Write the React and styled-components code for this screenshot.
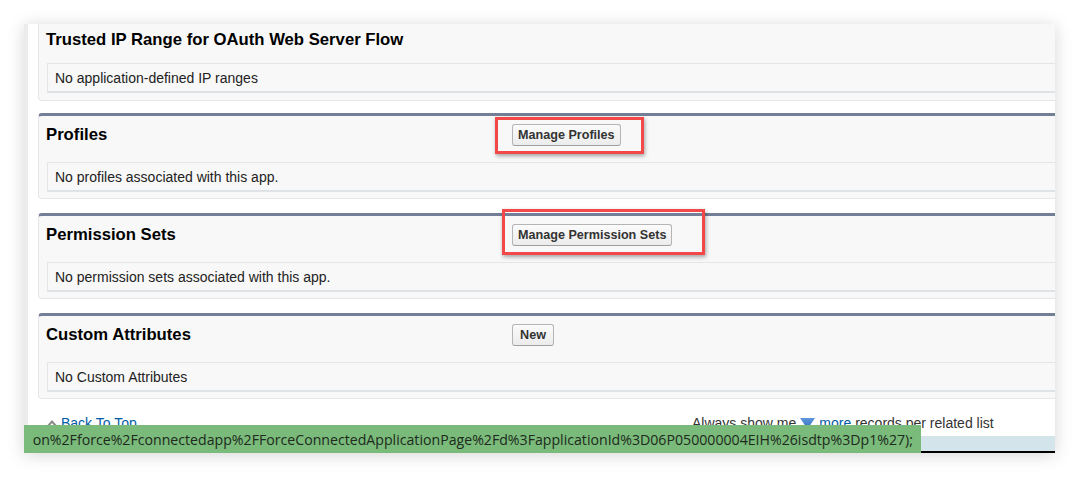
import React from 'react';
import styled, { createGlobalStyle } from 'styled-components';

const Global = createGlobalStyle`
  html, body { margin: 0; padding: 0; background: #fff; }
  body { font-family: "Liberation Sans", Arial, sans-serif; }
`;

const Stage = styled.div`
  box-sizing: border-box;
  width: 1079px;
  height: 477px;
  padding: 24px 0 0 24px;
  overflow: hidden;
`;

const Window = styled.div`
  position: relative;
  display: flex;
  width: 1031px;
  height: 429px;
  overflow: hidden;
  background: #fff;
  box-shadow: 0 2px 16px rgba(0, 0, 0, 0.17);
`;

const LeftRail = styled.div`
  flex: none;
  width: 4px;
  background: #ececec;
`;

const Content = styled.div`
  flex: none;
  display: flex;
  flex-direction: column;
  width: 1500px;
  padding-left: 10px;
`;

const Panel = styled.section`
  box-sizing: border-box;
  background: #f8f8f8;
  border: 1px solid #e6e6e6;
  border-top: ${(p) => (p.$clipped ? 'none' : '3px solid #747e96')};
  border-radius: ${(p) => (p.$clipped ? '0 0 4px 4px' : '4px')};
  padding-bottom: ${(p) => (p.$clipped ? 7 : 6)}px;
  margin-bottom: ${(p) => (p.$clipped ? 12 : 14)}px;
`;

const Header = styled.div`
  display: grid;
  grid-template-columns: 466px auto;
  align-items: center;
  height: ${(p) => (p.$clipped ? 31 : 38)}px;
  padding-left: 7px;
`;

const Title = styled.h2`
  margin: 0;
  font-size: 16.7px;
  font-weight: bold;
  color: #000;
  white-space: nowrap;
`;

const ButtonSlot = styled.div`
  position: relative;
  justify-self: start;
  display: inline-flex;
`;

const Button = styled.button`
  box-sizing: border-box;
  height: 22px;
  min-width: 42px;
  padding: 0 5px;
  font-family: "Liberation Sans", Arial, sans-serif;
  font-size: 12.6px;
  font-weight: bold;
  color: #333;
  background: linear-gradient(#fbfbfb, #ececec);
  border: 1px solid #b5b5b5;
  border-bottom-color: #9f9f9f;
  border-radius: 3px;
  cursor: pointer;
`;

const Highlight = styled.span`
  position: absolute;
  box-sizing: border-box;
  top: ${(p) => p.$t}px;
  right: ${(p) => p.$r}px;
  bottom: ${(p) => p.$b}px;
  left: ${(p) => p.$l}px;
  border: 3px solid #f24848;
  box-shadow: 1px 2px 4px rgba(0, 0, 0, 0.35);
  pointer-events: none;
  z-index: 2;
`;

const EmptyRow = styled.div`
  box-sizing: border-box;
  display: flex;
  align-items: center;
  height: 30px;
  margin: 8px 8px 0;
  padding-left: 7px;
  background: #f8f8f8;
  border: 1px solid #e3e5e7;
  border-bottom: 2px solid #e0e3e5;
  font-size: 14px;
  color: #222;
  white-space: nowrap;
`;

const Footer = styled.div`
  display: grid;
  grid-template-columns: 645px auto;
  align-items: center;
  height: 16px;
  margin-top: 2px;
  padding-left: 9px;
  font-size: 14px;
  color: #333;
  white-space: nowrap;
`;

const Link = styled.a`
  color: #015ba7;
  text-decoration: none;
  cursor: pointer;
`;

const BackToTop = styled(Link)`
  display: inline-flex;
  align-items: center;
  gap: 4px;
`;

const Pager = styled.div`
  display: inline-flex;
  align-items: center;
  gap: 4px;
`;

const BottomBar = styled.div`
  height: 15px;
  margin-top: 5px;
  background: #d3e4eb;
  border-bottom: 2px solid #000;
`;

const StatusBubble = styled.div`
  position: absolute;
  left: 0;
  bottom: 0;
  box-sizing: border-box;
  display: flex;
  justify-content: flex-end;
  align-items: center;
  width: 897px;
  height: 28px;
  padding-right: 8px;
  overflow: hidden;
  background: #7aba7a;
  color: #1d2a1d;
  font-family: "Open Sans", "Noto Sans", sans-serif;
  font-size: 14.15px;
  white-space: nowrap;
  z-index: 3;
`;

const ArrowUp = () => (
  <svg width="10" height="8" viewBox="0 0 10 8">
    <polyline points="1,7 5,2.5 9,7" fill="none" stroke="#8a8a8a" strokeWidth="2" />
  </svg>
);

const TriangleDown = () => (
  <svg width="15" height="11" viewBox="0 0 15 11">
    <defs>
      <linearGradient id="tri" x1="0" y1="0" x2="0" y2="1">
        <stop offset="0" stopColor="#5f97dc" />
        <stop offset="1" stopColor="#2f6cc0" />
      </linearGradient>
    </defs>
    <polygon points="0,0 15,0 7.5,11" fill="url(#tri)" />
  </svg>
);

const sections = [
  { title: 'Profiles', button: 'Manage Profiles', empty: 'No profiles associated with this app.', mark: { t: -7, r: -23, b: -8, l: -17 } },
  { title: 'Permission Sets', button: 'Manage Permission Sets', empty: 'No permission sets associated with this app.', mark: { t: -15, r: -33, b: -9, l: -10 } },
  { title: 'Custom Attributes', button: 'New', empty: 'No Custom Attributes' },
];

export default function App() {
  return (
    <>
      <Global />
      <Stage>
        <Window>
          <LeftRail />
          <Content>
            <Panel $clipped>
              <Header $clipped>
                <Title>Trusted IP Range for OAuth Web Server Flow</Title>
              </Header>
              <EmptyRow>No application-defined IP ranges</EmptyRow>
            </Panel>
            {sections.map((s) => (
              <Panel key={s.title}>
                <Header>
                  <Title>{s.title}</Title>
                  <ButtonSlot>
                    <Button>{s.button}</Button>
                    {s.mark && <Highlight $t={s.mark.t} $r={s.mark.r} $b={s.mark.b} $l={s.mark.l} />}
                  </ButtonSlot>
                </Header>
                <EmptyRow>{s.empty}</EmptyRow>
              </Panel>
            ))}
            <Footer>
              <BackToTop>
                <ArrowUp />
                Back To Top
              </BackToTop>
              <Pager>
                <span>Always show me</span>
                <TriangleDown />
                <Link>more</Link>
                <span>records per related list</span>
              </Pager>
            </Footer>
            <BottomBar />
          </Content>
          <StatusBubble>
            on%2Fforce%2Fconnectedapp%2FForceConnectedApplicationPage%2Fd%3FapplicationId%3D06P050000004EIH%26isdtp%3Dp1%27);
          </StatusBubble>
        </Window>
      </Stage>
    </>
  );
}
